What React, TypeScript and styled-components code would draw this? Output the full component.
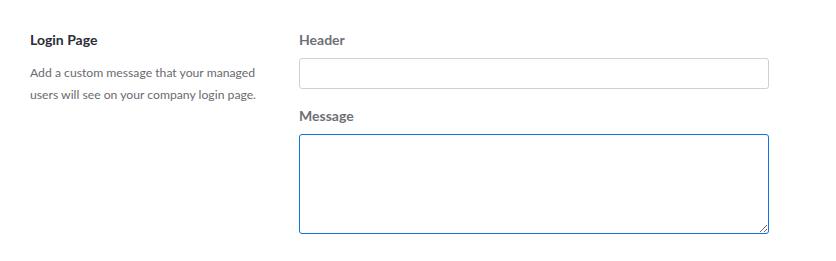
import styled, { createGlobalStyle } from "styled-components";

const GlobalStyle = createGlobalStyle`
	body {
		margin: 0;
		background: #ffffff;
		font-family: Lato, "Open Sans", Arial, sans-serif;
	}
`;

const Section = styled.section`
	display: grid;
	grid-template-columns: 269px 470px;
	padding: 32px 0 0 30px;
`;

const Aside = styled.div`
	display: flex;
	flex-direction: column;
	row-gap: 14px;
`;

const Title = styled.h3`
	margin: 0;
	font-size: 14px;
	line-height: 16px;
	font-weight: 700;
	color: #2d2d36;
`;

const Description = styled.p`
	margin: 0;
	font-size: 12.2px;
	line-height: 21.5px;
	color: #6a6a70;
	max-width: 240px;
`;

const Fields = styled.div`
	display: flex;
	flex-direction: column;
`;

const Field = styled.label`
	display: flex;
	flex-direction: column;
	row-gap: 10px;

	& + & {
		margin-top: 19px;
	}
`;

const Label = styled.span`
	font-size: 14px;
	line-height: 16px;
	font-weight: 700;
	color: #6e7078;
`;

const Input = styled.input`
	box-sizing: border-box;
	width: 100%;
	height: 31px;
	padding: 0 10px;
	border: 1px solid #d0d0d5;
	border-radius: 3px;
	font-family: inherit;
	font-size: 13px;
	outline: none;
`;

const TextArea = styled.textarea<{ $active?: boolean }>`
	box-sizing: border-box;
	width: 100%;
	height: 100px;
	padding: 6px 10px;
	border: 1px solid ${p => (p.$active ? "#0e71eb" : "#d0d0d5")};
	border-radius: 3px;
	font-family: inherit;
	font-size: 13px;
	outline: none;
	resize: both;
`;

export default function App() {
	return (
		<>
			<GlobalStyle />
			<Section>
				<Aside>
					<Title>Login Page</Title>
					<Description>
						Add a custom message that your managed users will see on your company login page.
					</Description>
				</Aside>
				<Fields>
					<Field>
						<Label>Header</Label>
						<Input type="text" />
					</Field>
					<Field>
						<Label>Message</Label>
						<TextArea $active />
					</Field>
				</Fields>
			</Section>
		</>
	);
}
